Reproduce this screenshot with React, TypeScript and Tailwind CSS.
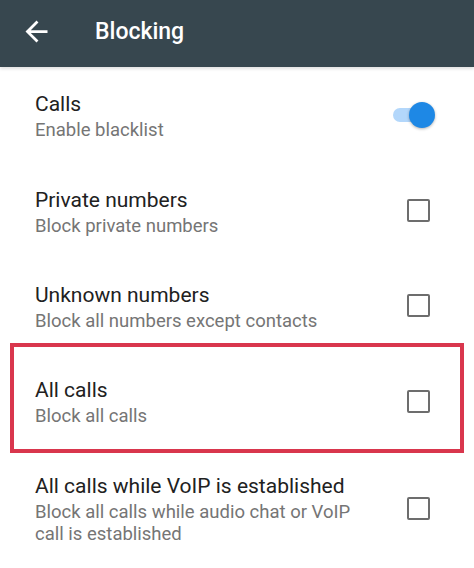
import React from 'react';

const Checkbox = () => (
  <div className="w-[23px] h-[23px] rounded-[2px] border-2 border-[#6d6d6d] shrink-0" />
);

const Toggle = () => (
  <div className="relative w-[42px] h-[26px] shrink-0 flex items-center">
    <div className="w-[36px] h-[14px] rounded-full bg-[#b3d7fb]" />
    <div className="absolute right-0 top-0 w-[26px] h-[26px] rounded-full bg-[#1e88e5] shadow-[0_1px_3px_rgba(0,0,0,0.3)]" />
  </div>
);

type RowProps = {
  title: string;
  subtitle: React.ReactNode;
  control: React.ReactNode;
  className: string;
};

const Row = ({ title, subtitle, control, className }: RowProps) => (
  <div className={`flex items-center ${className}`}>
    <div className="flex-1 min-w-0">
      <div className="text-[21px] leading-[30px] text-[#212121]">{title}</div>
      <div className="text-[18.5px] leading-[22px] text-[#757575]">{subtitle}</div>
    </div>
    {control}
  </div>
);

export default function App() {
  return (
    <div className="w-[474px] h-[568px] bg-white overflow-hidden" style={{ fontFamily: 'Roboto, "Noto Sans", sans-serif' }}>
      <div className="h-[67px] bg-[#37474f] flex items-center shadow-[0_2px_3px_rgba(0,0,0,0.12)] relative z-10">
        <svg className="ml-[20px] mb-[4px]" width="33" height="33" viewBox="0 0 24 24" fill="white">
          <path d="M20 11H7.83l5.59-5.59L12 4l-8 8 8 8 1.41-1.41L7.83 13H20v-2z" />
        </svg>
        <div className="ml-[42px] mb-[2px] text-[23px] font-medium text-white">Blocking</div>
      </div>

      <Row className="h-[96px] pl-[35px] pr-[39px]" title="Calls" subtitle="Enable blacklist" control={<Toggle />} />
      <Row className="h-[95px] pl-[35px] pr-[44px]" title="Private numbers" subtitle="Block private numbers" control={<Checkbox />} />
      <Row className="h-[85px] pt-[10px] pl-[35px] pr-[44px]" title="Unknown numbers" subtitle="Block all numbers except contacts" control={<Checkbox />} />
      <div className="mx-[10px] h-[110px] border-4 border-[#d9364d]">
        <Row className="h-full pt-[6px] pl-[21px] pr-[30px]" title="All calls" subtitle="Block all calls" control={<Checkbox />} />
      </div>
      <Row
        className="h-[110px] pl-[35px] pr-[44px]"
        title="All calls while VoIP is established"
        subtitle={<>Block all calls while audio chat or VoIP<br />call is established</>}
        control={<Checkbox />}
      />
    </div>
  );
}
